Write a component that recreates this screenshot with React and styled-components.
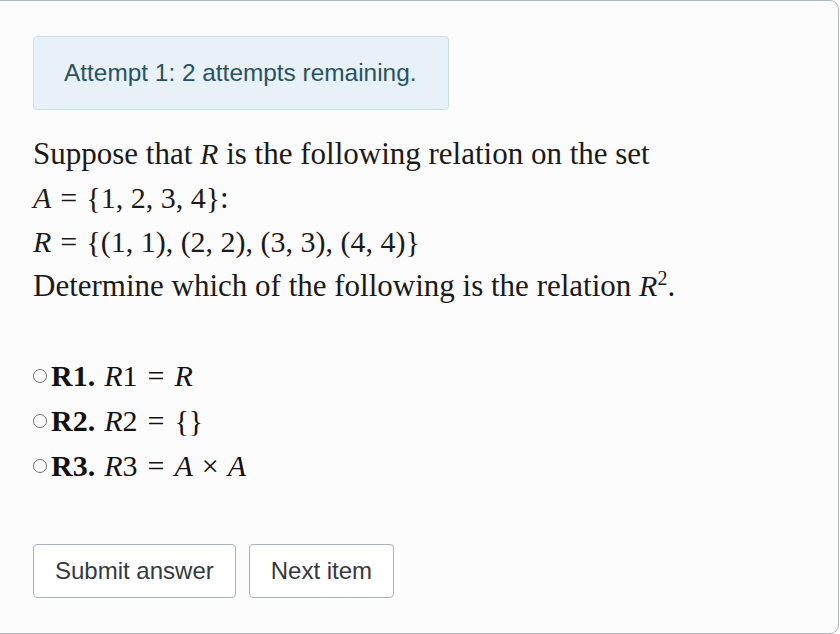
import React from "react";
import styled, { createGlobalStyle } from "styled-components";

const Global = createGlobalStyle`
  html, body { margin: 0; padding: 0; background: #ffffff; }
  body { width: 840px; height: 634px; overflow: hidden; }
`;

const Card = styled.div`
  box-sizing: border-box;
  width: 848px;
  height: 634px;
  margin-left: -9px;
  background: #fcfcfc;
  border: 1px solid #b3b8bf;
  border-radius: 9px;
  padding: 35px 0 0 41px;
`;

const Alert = styled.div`
  box-sizing: border-box;
  width: 416px;
  height: 74px;
  background: #e8f0f8;
  border: 1px solid #c6e0ec;
  border-radius: 4px;
  display: flex;
  align-items: center;
  padding-left: 30px;
  font-family: "Liberation Sans", Arial, sans-serif;
  font-size: 24.4px;
  color: #24555f;
`;

const Prompt = styled.div`
  margin-top: 22px;
  font-family: "Liberation Serif", "Times New Roman", serif;
  font-size: 31px;
  line-height: 44px;
  color: #1a1a1a;
`;

const Line = styled.div`
  white-space: nowrap;
`;

const M = styled.span`
  font-family: "Liberation Serif", "Times New Roman", serif;
  font-style: ${(p) => (p.i ? "italic" : "normal")};
  font-size: 30px;
`;

const Op = styled.span`
  font-family: "Liberation Serif", serif;
  font-size: 30px;
  margin: 0 ${(p) => p.gap ?? 9}px;
`;

const Sup = styled.sup`
  font-size: 20px;
  line-height: 0;
`;

const Options = styled.div`
  margin-top: 45px;
  display: flex;
  flex-direction: column;
`;

const Option = styled.label`
  display: flex;
  align-items: center;
  height: 45px;
  font-family: "Liberation Serif", "Times New Roman", serif;
  font-size: 30px;
  color: #111;
`;

const Radio = styled.span`
  box-sizing: border-box;
  width: 14px;
  height: 14px;
  border: 1.5px solid #707070;
  border-radius: 50%;
  margin-right: 4px;
  margin-top: 1px;
  background: #fff;
  flex: none;
`;

const Label = styled.b`
  font-weight: bold;
  margin-right: 9px;
`;

const Buttons = styled.div`
  margin-top: 56px;
  display: flex;
  gap: 13px;
`;

const Button = styled.button`
  box-sizing: border-box;
  height: 54px;
  padding: 0 21px;
  background: #ffffff;
  border: 1px solid #abb1b9;
  border-radius: 4px;
  font-family: "Liberation Sans", Arial, sans-serif;
  font-size: 24px;
  color: #343a40;
`;

export default function App() {
  return (
    <>
      <Global />
      <Card>
        <Alert>Attempt 1: 2 attempts remaining.</Alert>
        <Prompt>
          <Line>
            Suppose that <M i>R</M> is the following relation on the set
          </Line>
          <Line>
            <M i>A</M>
            <Op>=</Op>
            <M>{"{1, 2, 3, 4}"}</M>:
          </Line>
          <Line>
            <M i>R</M>
            <Op>=</Op>
            <M>{"{(1, 1), (2, 2), (3, 3), (4, 4)}"}</M>
          </Line>
          <Line>
            Determine which of the following is the relation <M i>R</M>
            <Sup>2</Sup>.
          </Line>
        </Prompt>
        <Options>
          <Option>
            <Radio />
            <Label>R1.</Label>
            <M i>R</M>
            <M>1</M>
            <Op gap={10}>=</Op>
            <M i>R</M>
          </Option>
          <Option>
            <Radio />
            <Label>R2.</Label>
            <M i>R</M>
            <M>2</M>
            <Op gap={10}>=</Op>
            <M>{"{}"}</M>
          </Option>
          <Option>
            <Radio />
            <Label>R3.</Label>
            <M i>R</M>
            <M>3</M>
            <Op gap={10}>=</Op>
            <M i>A</M>
            <Op gap={9}>×</Op>
            <M i>A</M>
          </Option>
        </Options>
        <Buttons>
          <Button>Submit answer</Button>
          <Button>Next item</Button>
        </Buttons>
      </Card>
    </>
  );
}
